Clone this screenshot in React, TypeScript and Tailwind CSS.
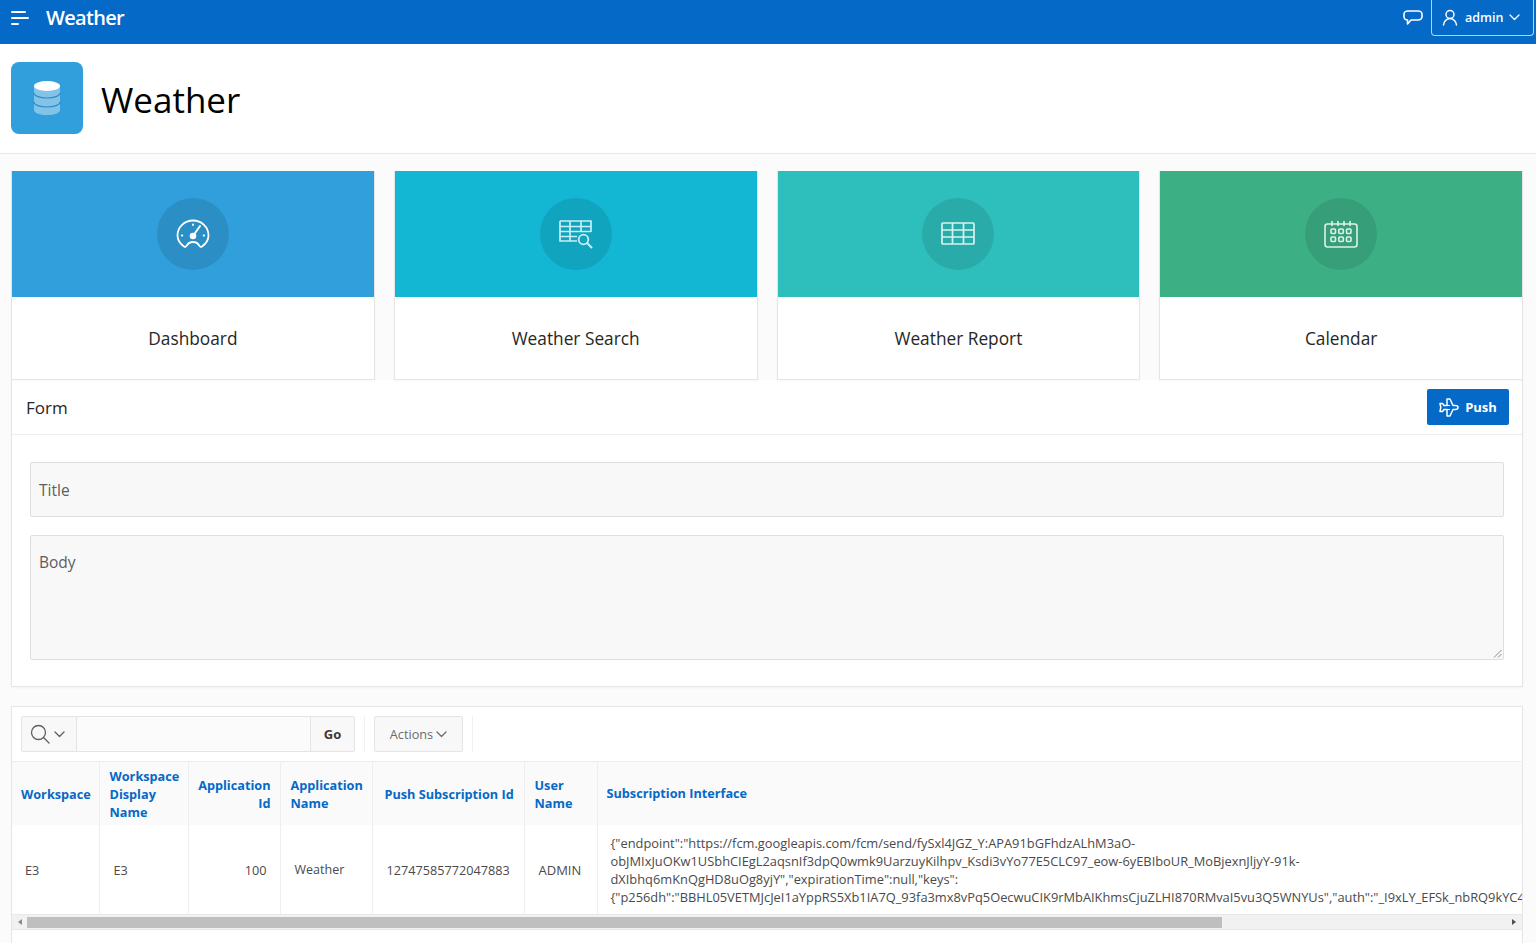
import { ReactNode } from 'react';

const font = "font-['Open_Sans','Noto_Sans',sans-serif]";

const GaugeIcon = () => (
  <svg width="34" height="34" viewBox="0 0 34 34" fill="none" stroke="white" strokeWidth="1.800" strokeLinecap="round" strokeLinejoin="round">
    <path d="M8 29.500C4.600 27 1.500 23.200 1.500 18.500 1.500 10.200 8.400 3.500 17 3.500s15.500 6.700 15.500 15c0 4.700-3.100 8.500-6.500 11-1 .7-2 .3-2.500-.6-1.300-2.300-3.700-3.900-6.500-3.900s-5.200 1.600-6.500 3.900c-.5.900-1.500 1.300-2.500.6z" />
    <path d="M17 19l7-10" strokeWidth="2" />
    <circle cx="17" cy="19" r="2.400" fill="white" />
    <path d="M17 7.500v.6M5.800 18.500h.6M27.600 18.500h.6" />
  </svg>
);

const TableSearchIcon = () => (
  <svg width="34" height="30" viewBox="0 0 34 30" fill="none" stroke="#c9eef5" strokeWidth="1.700">
    <path d="M1 2h31v11M1 2v20h17M1 7.500h31M1 12.500h31M1 17.500h17M11 2v20M22 2v11" />
    <circle cx="24.500" cy="20.500" r="4.800" strokeWidth="1.800" />
    <path d="M28 24l4.500 4.500" strokeWidth="2" strokeLinecap="round" />
  </svg>
);

const TableIcon = () => (
  <svg width="34" height="24" viewBox="0 0 34 24" fill="none" stroke="#d5f3f0" strokeWidth="1.700">
    <rect x="1" y="1" width="32" height="21" rx="1" />
    <path d="M1 8h32M1 15h32M11.500 1v21M22.500 1v21" />
  </svg>
);

const CalendarIcon = () => (
  <svg width="34" height="28" viewBox="0 0 34 28" fill="none" stroke="#dcf2e8" strokeWidth="1.600" strokeLinecap="round">
    <rect x="1" y="4" width="32" height="23" rx="2.500" />
    <path d="M8 1.500v4M14 1.500v4M20 1.500v4M26 1.500v4" />
    <rect x="7" y="9" width="4.500" height="4.500" rx="1" />
    <rect x="14.800" y="9" width="4.500" height="4.500" rx="1" />
    <rect x="22.500" y="9" width="4.500" height="4.500" rx="1" />
    <rect x="7" y="17" width="4.500" height="4.500" rx="1" />
    <rect x="14.800" y="17" width="4.500" height="4.500" rx="1" />
    <rect x="22.500" y="17" width="4.500" height="4.500" rx="1" />
  </svg>
);

const DatabaseIcon = () => (
  <svg width="28" height="36" viewBox="0 0 28 36">
    <path d="M1 6v24c0 3 6 5 13 5s13-2 13-5V6z" fill="#84c3e8" />
    <path d="M1 13c0 3 6 5 13 5s13-2 13-5M1 22c0 3 6 5 13 5s13-2 13-5" fill="none" stroke="#2b8cc4" strokeWidth="1.200" />
    <ellipse cx="14" cy="6" rx="13" ry="5" fill="white" />
  </svg>
);

const PlaneIcon = () => (
  <svg width="20" height="19" viewBox="0 0 20 19" fill="none" stroke="white" strokeWidth="1.500" strokeLinejoin="round">
    <path d="M1 5.500h2.500l1.500 2h3V1h3l3 6.500h2.500c1.300 0 2.500.9 2.500 2s-1.200 2-2.500 2H14L11 18H8v-6.500H5l-1.500 2H1l.8-4z" />
    <path d="M8 7.500h3M8 11.500h3" strokeWidth="1.200" />
  </svg>
);

const Chevron = ({ className }: { className: string }) => (
  <svg className={className} width="11" height="7" viewBox="0 0 11 7" fill="none" stroke="currentColor" strokeWidth="1.300" strokeLinecap="round" strokeLinejoin="round">
    <path d="M1 1l4.500 4.500L10 1" />
  </svg>
);

const cards: { label: string; bg: string; circle: string; icon: ReactNode }[] = [
  { label: 'Dashboard', bg: 'bg-[#309fdb]', circle: 'bg-[#2b8fc5]', icon: <GaugeIcon /> },
  { label: 'Weather Search', bg: 'bg-[#13b6d3]', circle: 'bg-[#11a4be]', icon: <TableSearchIcon /> },
  { label: 'Weather Report', bg: 'bg-[#2ebfbc]', circle: 'bg-[#29aca9]', icon: <TableIcon /> },
  { label: 'Calendar', bg: 'bg-[#3caf85]', circle: 'bg-[#369e78]', icon: <CalendarIcon /> },
];

const columns = [
  { title: ['Workspace'], width: 'w-[87px]', cls: 'text-left pl-[9px]' },
  { title: ['Workspace', 'Display', 'Name'], width: 'w-[89px]', cls: 'text-left pl-[10px]' },
  { title: ['Application', 'Id'], width: 'w-[92px]', cls: 'text-right pr-[9px]' },
  { title: ['Application', 'Name'], width: 'w-[92px]', cls: 'text-left pl-[10px]' },
  { title: ['Push Subscription Id'], width: 'w-[152px]', cls: 'text-left pl-[12px]' },
  { title: ['User', 'Name'], width: 'w-[73px]', cls: 'text-left pl-[10px]' },
];

const subscription = [
  '{"endpoint":"https://fcm.googleapis.com/fcm/send/fySxl4JGZ_Y:APA91bGFhdzALhM3aO-',
  'obJMIxJuOKw1USbhCIEgL2aqsnIf3dpQ0wmk9UarzuyKilhpv_Ksdi3vYo77E5CLC97_eow-6yEBIboUR_MoBjexnJljyY-91k-',
  'dXIbhq6mKnQgHD8uOg8yjY","expirationTime":null,"keys":',
  '{"p256dh":"BBHL05VETMJcJeI1aYppRS5Xb1IA7Q_93fa3mx8vPq5OecwuCIK9rMbAIKhmsCjuZLHI870RMvaI5vu3Q5WNYUs","auth":"_I9xLY_EFSk_nbRQ9kYC4',
];

const rowValues = [
  { text: 'E3', cls: 'text-left pl-[13px] text-[12.700px]' },
  { text: 'E3', cls: 'text-left pl-[14px] text-[12.700px]' },
  { text: '100', cls: 'text-right pr-[13px] text-[12.700px]' },
  { text: 'Weather', cls: 'text-left pl-[14px] text-[12.500px]' },
  { text: '12747585772047883', cls: 'text-left pl-[14px] text-[12.700px]' },
  { text: 'ADMIN', cls: 'text-left pl-[14px] text-[13px]' },
];

export default function App() {
  return (
    <div className={`${font} h-[943px] w-[1536px] overflow-hidden bg-[#fbfbfb] text-[#262626]`}>
      <header className="flex h-[44px] items-start justify-between bg-[#0569c7] shadow-[0_1px_2px_rgba(0,0,0,0.2)]">
        <div className="flex items-center pt-[4px]">
          <div className="ml-[11px] flex w-[18px] flex-col gap-[4px]">
            <span className="h-[2px] w-[15px] rounded bg-white" />
            <span className="h-[2px] w-[18px] rounded bg-white" />
            <span className="h-[2px] w-[8px] rounded bg-white" />
          </div>
          <span className="ml-[17px] text-[20px] font-semibold leading-[28px] tracking-[-0.7px] text-white">Weather</span>
        </div>
        <div className="flex items-start">
          <svg className="mr-[8px] mt-[10px]" width="20" height="16" viewBox="0 0 20 16" fill="none" stroke="white" strokeWidth="1.600" strokeLinejoin="round">
            <path d="M5 1h10c2.200 0 4 1.400 4 3.200v2.600C19 8.600 17.200 10 15 10H8l-3.500 4V10C2.600 10 1 8.600 1 6.800V4.200C1 2.400 2.800 1 5 1z" />
          </svg>
          <div className="mr-[2px] flex h-[36px] w-[103px] items-center rounded-b-[4px] border border-t-0 border-[#b5d3ef] pl-[10px] text-white">
            <svg width="16" height="17" viewBox="0 0 16 17" fill="none" stroke="white" strokeWidth="1.500" strokeLinecap="round">
              <circle cx="8" cy="5.500" r="4" />
              <path d="M1.500 16c.3-3.500 3-6.500 6.500-6.500s6.200 3 6.500 6.500" />
            </svg>
            <span className="ml-[7px] pt-[1px] text-[12.500px] font-semibold">admin</span>
            <Chevron className="ml-[6px] text-white" />
          </div>
        </div>
      </header>

      <div className="flex h-[110px] items-center border-b border-[#e8e8e8] bg-white pb-[1px] pl-[11px]">
        <div className="flex h-[72px] w-[72px] items-center justify-center rounded-[8px] bg-[#309fdb]">
          <DatabaseIcon />
        </div>
        <h1 className="ml-[18px] mt-[2px] text-[35px] leading-none text-black">Weather</h1>
      </div>

      <main className="pl-[11px] pr-[13px] pt-[17px]">
        <div className="grid grid-cols-4 gap-[19px]">
          {cards.map((card) => (
            <div key={card.label} className="h-[209px] border border-t-0 border-[#e6e6e6] bg-white shadow-[0_1px_2px_rgba(0,0,0,0.04)]">
              <div className={`flex h-[126px] items-center justify-center ${card.bg}`}>
                <div className={`flex h-[72px] w-[72px] items-center justify-center rounded-full ${card.circle}`}>
                  {card.icon}
                </div>
              </div>
              <div className="flex h-[82px] items-center justify-center pt-[2px] text-[17.300px] text-[#262626]">{card.label}</div>
            </div>
          ))}
        </div>

        <section className="h-[307px] border border-t-0 border-[#e6e6e6] bg-white shadow-[0_1px_2px_rgba(0,0,0,0.04)]">
          <div className="flex h-[55px] items-center justify-between border-b border-[#eeeeee] pl-[14px] pr-[13px]">
            <h2 className="pt-[2px] text-[17px] text-[#262626]">Form</h2>
            <button className="flex h-[36px] w-[82px] items-center justify-center gap-[6px] rounded-[2px] bg-[#0569c7] pt-[1px] text-[13px] font-bold text-white">
              <PlaneIcon />
              Push
            </button>
          </div>
          <div className="flex flex-col gap-[18px] px-[18px] pt-[27px]">
            <div className="flex h-[55px] items-center rounded-[2px] border border-[#dfdfdf] bg-[#f8f8f8] pl-[8px] pt-[2px] text-[15.500px] text-[#5e5e5e]">
              Title
            </div>
            <div className="relative h-[125px] rounded-[2px] border border-[#dfdfdf] bg-[#f8f8f8] pl-[8px] pt-[14px] text-[15.500px] leading-[24px] text-[#5e5e5e]">
              Body
              <svg className="absolute bottom-[1px] right-[1px]" width="9" height="9" viewBox="0 0 9 9" stroke="#8a8a8a" strokeWidth="1">
                <path d="M8.500 1L1 8.500M8.500 5L5 8.500" />
              </svg>
            </div>
          </div>
        </section>

        <section className="mt-[19px] border border-[#e6e6e6] bg-white">
          <div className="flex h-[55px] items-center border-b border-[#eeeeee] pl-[9px]">
            <div className="flex h-[36px] w-[334px] overflow-hidden rounded-[2px] border border-[#e4e4e4]">
              <div className="flex w-[54px] items-center gap-[4px] bg-[#f8f8f8] pl-[8px] text-[#5e5e5e]">
                <svg width="20" height="20" viewBox="0 0 20 20" fill="none" stroke="currentColor" strokeWidth="1.300" strokeLinecap="round">
                  <circle cx="8.500" cy="8.500" r="7" />
                  <path d="M13.500 13.500L19 19" />
                </svg>
                <Chevron className="text-[#5e5e5e]" />
              </div>
              <div className="flex-1 border-x border-[#e4e4e4] bg-[#fbfbfb]" />
              <div className="flex w-[43px] items-center justify-center bg-[#f8f8f8] pt-[1px] text-[13px] font-bold text-[#3a3a3a]">Go</div>
            </div>
            <div className="ml-[9px] h-[36px] border-l border-[#f0f0f0]" />
            <div className="ml-[9px] flex h-[36px] w-[89px] items-center justify-center gap-[3px] rounded-[2px] border border-[#e4e4e4] bg-[#f8f8f8] pt-[1px] text-[12.700px] text-[#6b6b6b]">
              Actions
              <Chevron className="text-[#6b6b6b]" />
            </div>
            <div className="ml-[9px] h-[36px] border-l border-[#f0f0f0]" />
          </div>

          <div className="overflow-hidden">
            <table className="w-[1510px] table-fixed border-collapse">
              <thead>
                <tr className="h-[63px] bg-[#fafafa]">
                  {columns.map((col, i) => (
                    <th key={i} className={`${col.width} ${col.cls} border-r border-[#eeeeee] text-[12.700px] font-bold leading-[18px] text-[#0569c7]`}>
                      {col.title.map((line) => (
                        <div key={line} className="whitespace-nowrap">{line}</div>
                      ))}
                    </th>
                  ))}
                  <th className="pl-[9px] text-left text-[12.700px] font-bold text-[#0569c7]">Subscription Interface</th>
                </tr>
              </thead>
              <tbody>
                <tr className="h-[89px]">
                  {rowValues.map((v, i) => (
                    <td key={i} className={`${v.cls} border-r border-[#eeeeee] pt-[2px] font-normal text-[#4a4a4a]`}>
                      {v.text}
                    </td>
                  ))}
                  <td className="whitespace-nowrap pl-[13px] text-[12.850px] leading-[18px] text-[#4a4a4a]">
                    {subscription.map((line) => (
                      <div key={line}>{line}</div>
                    ))}
                  </td>
                </tr>
              </tbody>
            </table>
          </div>

          <div className="flex h-[16px] items-center border-y border-[#e8e8e8] bg-[#f1f1f1] text-[#6b6b6b]">
            <span className="ml-[6px] h-0 w-0 border-y-[3px] border-r-[4px] border-y-transparent border-r-[#8a8a8a]" />
            <div className="ml-[5px] h-[11px] w-[1195px] bg-[#bfbfbf]" />
            <span className="ml-auto mr-[6px] h-0 w-0 border-y-[3px] border-l-[4px] border-y-transparent border-l-[#505050]" />
          </div>
          <div className="h-[40px]" />
        </section>
      </main>
    </div>
  );
}
